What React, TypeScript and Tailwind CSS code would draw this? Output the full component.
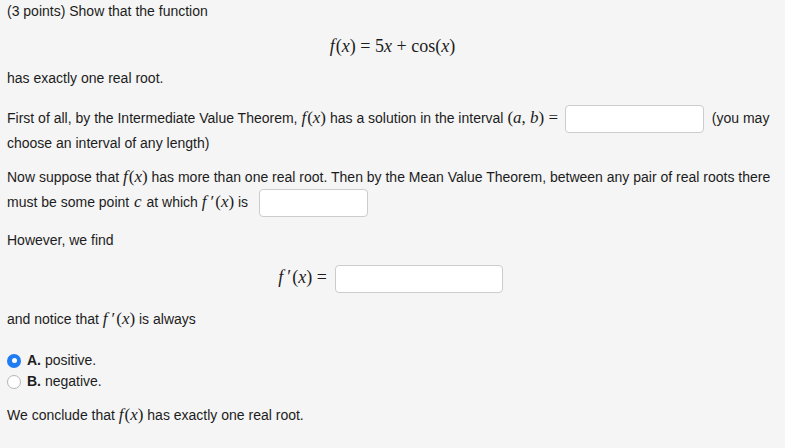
import React from 'react';

const Fx: React.FC<{ prime?: boolean }> = ({ prime }) => (
  <span className="font-['Liberation_Serif',serif] text-[17px] leading-none">
    <i className="pr-[1px]">f</i>
    {prime ? <span className="pl-[3px] pr-[1px]">{'\u2032'}</span> : ''}(<i>x</i>)
  </span>
);

const Box: React.FC<{ w: string }> = ({ w }) => (
  <span
    className={`inline-block align-middle h-[28px] -my-[2px] mr-[4px] bg-white border border-[#cccccc] rounded-[4px] ${w}`}
  />
);

const App: React.FC = () => {
  return (
    <div className="w-[785px] h-[448px] overflow-hidden bg-[#f5f5f5] text-[#1c1c1c] text-[14px] font-['Liberation_Sans',Arial,sans-serif]">
      <div className="px-[7px]">
        <div className="leading-[22px] whitespace-nowrap">(3 points) Show that the function</div>

        {/* display formula */}
        <div className="mt-[11.5px] leading-[25px] text-center font-['Liberation_Serif',serif] text-[18px] whitespace-nowrap">
          <i className="pr-[1px]">f</i>(<i>x</i>) = 5<i>x</i> + cos(<i>x</i>)
        </div>

        <div className="mt-[7px] leading-[25px] whitespace-nowrap">has exactly one real root.</div>

        <div className="mt-[15px] leading-[25px] whitespace-nowrap">
          First of all, by the Intermediate Value Theorem, <Fx /> has a solution in the interval{' '}
          <span className="font-['Liberation_Serif',serif] text-[17px] leading-none">
            (<i>a</i>, <i>b</i>) =
          </span>{' '}
          <Box w="w-[139px] ml-[3px]" /> (you may
          <br />
          choose an interval of any length)
        </div>

        <div className="mt-[9px] leading-[25px] whitespace-nowrap">
          Now suppose that <Fx /> has more than one real root. Then by the Mean Value Theorem, between any pair of real roots there
          <br />
          must be some point <i className="font-['Liberation_Serif',serif] text-[17px] leading-none px-[1px]">c</i> at which <Fx prime /> is{' '}
          <Box w="w-[109px] ml-[7px]" />
        </div>

        <div className="mt-[13px] leading-[25px] whitespace-nowrap">However, we find</div>

        <div className="mt-[13px] leading-[25px] text-center whitespace-nowrap">
          <span className="font-['Liberation_Serif',serif] text-[18px] leading-none">
            <i className="pr-[1px]">f</i>
            <span className="pl-[3px] pr-[1px]">{'\u2032'}</span>(<i>x</i>) =
          </span>{' '}
          <Box w="w-[168px] ml-[4px]" />
        </div>

        <div className="mt-[16px] leading-[25px] whitespace-nowrap">
          and notice that <Fx prime /> is always
        </div>

        <div className="mt-[18px]">
          <label className="flex items-center gap-[6px] h-[21px]">
            <span className="w-[14px] h-[14px] rounded-full bg-[#1f7cf3] flex items-center justify-center">
              <span className="w-[5px] h-[5px] rounded-full bg-white" />
            </span>
            <span>
              <b>A.</b> positive.
            </span>
          </label>
          <label className="flex items-center gap-[6px] h-[21px]">
            <span className="w-[14px] h-[14px] rounded-full bg-white border border-[#b5b5b5]" />
            <span>
              <b>B.</b> negative.
            </span>
          </label>
        </div>

        <div className="mt-[11px] leading-[25px] whitespace-nowrap">
          We conclude that <Fx /> has exactly one real root.
        </div>
      </div>
    </div>
  );
};

export default App;
